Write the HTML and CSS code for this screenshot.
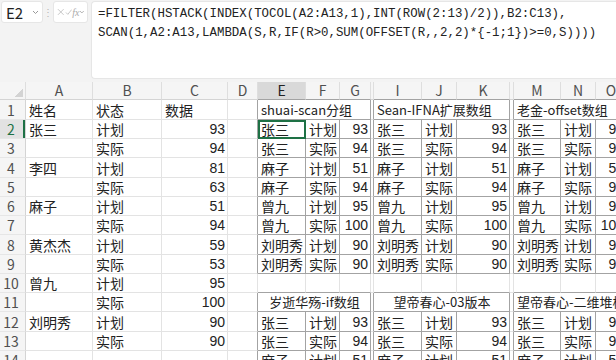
FILE: index.html
```html
<!DOCTYPE html>
<html lang="zh-CN">
  <head>
    <meta charset="UTF-8" />
    <title>FILTER 分组</title>
    <link rel="stylesheet" href="styles.css">
  </head>
  <body>
    <div class="topbar">
      <div class="namebox">
        <span>E2</span>
        <svg width="7" height="5" viewBox="0 0 7 5"><path d="M1 1l2.5 2.5L6 1" fill="none" stroke="#999" stroke-width="1"/></svg>
      </div>
      <div class="sep">⋮</div>
      <div class="fxbox">
        <svg width="8" height="8" viewBox="0 0 8 8"><path d="M1 1l6 6M7 1L1 7" stroke="#c4c4c4" stroke-width="1"/></svg>
        <svg width="8" height="8" viewBox="0 0 8 8"><path d="M1 4.5l2 2L7 1.5" fill="none" stroke="#c4c4c4" stroke-width="1"/></svg>
        <span class="fx">fx</span>
        <svg width="6" height="4" viewBox="0 0 6 4"><path d="M1 1l2 2 2-2" fill="none" stroke="#aaa" stroke-width="1"/></svg>
      </div>
      <div class="formula">=FILTER(HSTACK(INDEX(TOCOL(A2:A13,1),INT(ROW(2:13)/2)),B2:C13),
SCAN(1,A2:A13,LAMBDA(S,R,IF(R&gt;0,SUM(OFFSET(R,,2,2)*{-1;1})&gt;=0,S))))</div>
    </div>

    <table class="sheet">
      <colgroup>
        <col class="c-rh"><col class="c-a"><col class="c-b"><col class="c-c"><col class="c-d">
        <col class="c-e"><col class="c-f"><col class="c-g"><col class="c-h">
        <col class="c-i"><col class="c-j"><col class="c-k"><col class="c-l">
        <col class="c-m"><col class="c-n"><col class="c-o">
      </colgroup>
      <tr class="head">
        <th class="corner"></th><th>A</th><th>B</th><th>C</th><th>D</th>
        <th class="csel bt">E</th><th class="bt">F</th><th class="bt">G</th><th class="sp"></th>
        <th class="bt">I</th><th class="bt">J</th><th class="bt">K</th><th class="sp"></th>
        <th class="bt">M</th><th class="bt">N</th><th class="bt">O</th>
      </tr>
      <tr class="tall">
        <th class="rh">1</th><td>姓名</td><td>状态</td><td>数据</td><td class="bl"></td>
        <td colspan="3" class="b t">shuai-scan分组</td><td class="sp bl"></td>
        <td colspan="3" class="b t">Sean-IFNA扩展数组</td><td class="sp bl"></td>
        <td colspan="3" class="b t">老金-offset数组</td>
      </tr>
      <tr>
        <th class="rh rsel">2</th><td>张三</td><td>计划</td><td class="n">93</td><td class="bl"></td>
        <td class="b sel">张三</td><td class="b">计划</td><td class="b n">93</td><td class="sp bl"></td>
        <td class="b">张三</td><td class="b">计划</td><td class="b n">93</td><td class="sp bl"></td>
        <td class="b">张三</td><td class="b">计划</td><td class="b n">93</td>
      </tr>
      <tr>
        <th class="rh">3</th><td></td><td>实际</td><td class="n">94</td><td class="bl"></td>
        <td class="b">张三</td><td class="b">实际</td><td class="b n">94</td><td class="sp bl"></td>
        <td class="b">张三</td><td class="b">实际</td><td class="b n">94</td><td class="sp bl"></td>
        <td class="b">张三</td><td class="b">实际</td><td class="b n">94</td>
      </tr>
      <tr class="tall">
        <th class="rh">4</th><td>李四</td><td>计划</td><td class="n">81</td><td class="bl"></td>
        <td class="b">麻子</td><td class="b">计划</td><td class="b n">51</td><td class="sp bl"></td>
        <td class="b">麻子</td><td class="b">计划</td><td class="b n">51</td><td class="sp bl"></td>
        <td class="b">麻子</td><td class="b">计划</td><td class="b n">51</td>
      </tr>
      <tr>
        <th class="rh">5</th><td></td><td>实际</td><td class="n">63</td><td class="bl"></td>
        <td class="b">麻子</td><td class="b">实际</td><td class="b n">94</td><td class="sp bl"></td>
        <td class="b">麻子</td><td class="b">实际</td><td class="b n">94</td><td class="sp bl"></td>
        <td class="b">麻子</td><td class="b">实际</td><td class="b n">94</td>
      </tr>
      <tr>
        <th class="rh">6</th><td>麻子</td><td>计划</td><td class="n">51</td><td class="bl"></td>
        <td class="b">曾九</td><td class="b">计划</td><td class="b n">95</td><td class="sp bl"></td>
        <td class="b">曾九</td><td class="b">计划</td><td class="b n">95</td><td class="sp bl"></td>
        <td class="b">曾九</td><td class="b">计划</td><td class="b n">95</td>
      </tr>
      <tr>
        <th class="rh">7</th><td></td><td>实际</td><td class="n">94</td><td class="bl"></td>
        <td class="b">曾九</td><td class="b">实际</td><td class="b n">100</td><td class="sp bl"></td>
        <td class="b">曾九</td><td class="b">实际</td><td class="b n">100</td><td class="sp bl"></td>
        <td class="b">曾九</td><td class="b">实际</td><td class="b n">100</td>
      </tr>
      <tr class="tall">
        <th class="rh">8</th><td>黄杰杰</td><td>计划</td><td class="n">59</td><td class="bl"></td>
        <td class="b">刘明秀</td><td class="b">计划</td><td class="b n">90</td><td class="sp bl"></td>
        <td class="b">刘明秀</td><td class="b">计划</td><td class="b n">90</td><td class="sp bl"></td>
        <td class="b">刘明秀</td><td class="b">计划</td><td class="b n">90</td>
      </tr>
      <tr>
        <th class="rh">9</th><td></td><td>实际</td><td class="n">53</td><td class="bl"></td>
        <td class="b">刘明秀</td><td class="b">实际</td><td class="b n">90</td><td class="sp bl"></td>
        <td class="b">刘明秀</td><td class="b">实际</td><td class="b n">90</td><td class="sp bl"></td>
        <td class="b">刘明秀</td><td class="b">实际</td><td class="b n">90</td>
      </tr>
      <tr>
        <th class="rh">10</th><td>曾九</td><td>计划</td><td class="n">95</td><td></td>
        <td class="bt"></td><td class="bt"></td><td class="bt"></td><td class="sp"></td>
        <td class="bt"></td><td class="bt"></td><td class="bt"></td><td class="sp"></td>
        <td class="bt"></td><td class="bt"></td><td class="bt"></td>
      </tr>
      <tr>
        <th class="rh">11</th><td></td><td>实际</td><td class="n">100</td><td class="bl"></td>
        <td colspan="3" class="b t c">岁逝华殇-if数组</td><td class="sp bl"></td>
        <td colspan="3" class="b t c">望帝春心-03版本</td><td class="sp bl"></td>
        <td colspan="3" class="b t">望帝春心-二维堆栈数组</td>
      </tr>
      <tr class="tall">
        <th class="rh">12</th><td>刘明秀</td><td>计划</td><td class="n">90</td><td class="bl"></td>
        <td class="b">张三</td><td class="b">计划</td><td class="b n">93</td><td class="sp bl"></td>
        <td class="b">张三</td><td class="b">计划</td><td class="b n">93</td><td class="sp bl"></td>
        <td class="b">张三</td><td class="b">计划</td><td class="b n">93</td>
      </tr>
      <tr>
        <th class="rh">13</th><td></td><td>实际</td><td class="n">90</td><td class="bl"></td>
        <td class="b">张三</td><td class="b">实际</td><td class="b n">94</td><td class="sp bl"></td>
        <td class="b">张三</td><td class="b">实际</td><td class="b n">94</td><td class="sp bl"></td>
        <td class="b">张三</td><td class="b">实际</td><td class="b n">94</td>
      </tr>
      <tr>
        <th class="rh">14</th><td></td><td></td><td></td><td class="bl"></td>
        <td class="b">麻子</td><td class="b">计划</td><td class="b n">51</td><td class="sp bl"></td>
        <td class="b">麻子</td><td class="b">计划</td><td class="b n">51</td><td class="sp bl"></td>
        <td class="b">麻子</td><td class="b">计划</td><td class="b n">51</td>
      </tr>
    </table>
  </body>
</html>
```

FILE: styles.css
```css
body {
  margin: 0;
  width: 616px;
  height: 360px;
  overflow: hidden;
  background: #f3f3f3;
  font-family: "Noto Sans CJK SC", sans-serif;
  color: #222;
}
.topbar {
  display: flex;
  align-items: flex-start;
  height: 82px;
  padding: 1px 0 0 1px;
  box-sizing: border-box;
}
.namebox {
  width: 42px;
  height: 22px;
  box-sizing: border-box;
  background: #fff;
  border: 1px solid #e6e6e6;
  border-radius: 3px;
  display: flex;
  align-items: center;
  justify-content: space-between;
  padding: 0 3px 0 4px;
  font-size: 15px;
}
.sep {
  width: 10px;
  text-align: center;
  font-size: 10px;
  line-height: 22px;
  color: #b5b5b5;
}
.fxbox {
  width: 35px;
  height: 22px;
  box-sizing: border-box;
  background: #fff;
  border: 1px solid #e6e6e6;
  border-radius: 3px;
  display: flex;
  align-items: center;
  justify-content: space-between;
  padding: 0 2px 0 3px;
}
.fx {
  font-family: "Liberation Serif", serif;
  font-style: italic;
  font-size: 10px;
  color: #aaa;
}
.formula {
  flex: 1;
  height: 78px;
  margin-left: 3px;
  box-sizing: border-box;
  background: #fff;
  border: 1px solid #e6e6e6;
  border-right: none;
  border-radius: 4px 0 0 4px;
  padding: 3px 0 0 6px;
  font-family: "Liberation Mono", monospace;
  font-size: 12.4px;
  line-height: 19px;
  white-space: pre;
}

.sheet {
  border-collapse: separate;
  border-spacing: 0;
  table-layout: fixed;
  width: 627px;
  background: #fff;
}
.c-rh { width: 26px; }
.c-a { width: 67px; }
.c-b { width: 69px; }
.c-c { width: 66px; }
.c-d { width: 30px; }
.c-e { width: 48px; }
.c-f { width: 34px; }
.c-g { width: 31px; }
.c-h { width: 3px; }
.c-i { width: 48px; }
.c-j { width: 35px; }
.c-k { width: 53px; }
.c-l { width: 4px; }
.c-m { width: 47px; }
.c-n { width: 35px; }
.c-o { width: 31px; }

tr { height: 19px; }
tr.tall { height: 20px; }
tr.head { height: 18px; }

th {
  padding: 0;
  font-weight: normal;
  font-size: 14px;
  line-height: 17px;
  color: #505050;
  background: #f5f5f5;
  border-right: 1px solid #dedede;
  border-bottom: 1px solid #d4d4d4;
  white-space: nowrap;
}
th.rh {
  padding-right: 3px;
  line-height: 18px;
  border-right-color: #d4d4d4;
  border-bottom-color: #e6e6e6;
}
th.corner {
  background: #f5f5f5 linear-gradient(135deg, transparent 62%, #d3d3d3 62%) no-repeat right 2px bottom 2px / 11px 11px;
}
th.csel {
  background: #d9d9d9;
  color: #222;
}
th.rsel {
  background: #e2e2e2;
  color: #1e7145;
  box-shadow: inset -2px 0 #1e7145;
}

td {
  padding: 0 2px 0 3px;
  font-size: 14px;
  line-height: 18px;
  white-space: nowrap;
  border-right: 1px solid #e3e3e3;
  border-bottom: 1px solid #e3e3e3;
}
td.n {
  text-align: right;
  font-family: "Liberation Sans", sans-serif;
  font-size: 14px;
}
td.sp,
th.sp {
  padding: 0;
}
td.b {
  border-right-color: #a3a3a3;
  border-bottom-color: #a3a3a3;
}
td.bl {
  border-right-color: #a3a3a3;
}
td.bt,
th.bt {
  border-bottom-color: #a3a3a3;
}
td.t {
  font-size: 13px;
  padding-left: 3px;
}
td.c {
  text-align: center;
}
td.sel {
  outline: 2px solid #1e7145;
  outline-offset: -2px;
}
```
